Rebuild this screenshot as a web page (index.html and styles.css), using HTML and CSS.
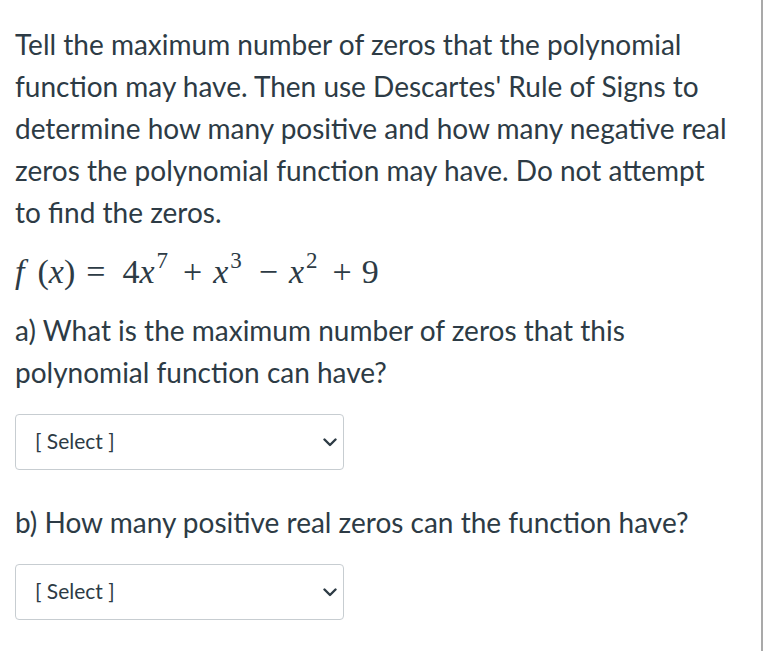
FILE: index.html
```html
<!DOCTYPE html>
<html>
<head>
<meta charset="utf-8">
<link rel="stylesheet" href="styles.css">
</head>
<body>
<div class="page">
  <p class="text intro">Tell the maximum number of zeros that the polynomial function may have. Then use Descartes' Rule of Signs to determine how many positive and how many negative real zeros the polynomial function may have. Do not attempt to find the zeros.</p>
  <p class="math"><span class="mi f">f</span><span class="mo">(</span><span class="mi">x</span><span class="mo">)</span><span class="rel">=</span><span class="mn">4</span><span class="mi">x</span><sup>7</sup><span class="bin">+</span><span class="mi">x</span><sup>3</sup><span class="bin minus">−</span><span class="mi">x</span><sup>2</sup><span class="bin last">+</span><span class="mn">9</span></p>
  <p class="text qa">a) What is the maximum number of zeros that this polynomial function can have?</p>
  <div class="select"><span class="select-label">[ Select ]</span><svg class="chev" width="14" height="9" viewBox="0 0 14 9"><path d="M1.5 1.5 L7 7 L12.5 1.5" fill="none" stroke="#2d3b45" stroke-width="2.4" stroke-linecap="round" stroke-linejoin="round"/></svg></div>
  <p class="text qb">b) How many positive real zeros can the function have?</p>
  <div class="select"><span class="select-label">[ Select ]</span><svg class="chev" width="14" height="9" viewBox="0 0 14 9"><path d="M1.5 1.5 L7 7 L12.5 1.5" fill="none" stroke="#2d3b45" stroke-width="2.4" stroke-linecap="round" stroke-linejoin="round"/></svg></div>
</div>
</body>
</html>
```
FILE: styles.css
```css
html, body {
  margin: 0;
  padding: 0;
  background: #fff;
}
.page {
  box-sizing: border-box;
  width: 763px;
  height: 651px;
  border-right: 2px solid #a9a9a9;
  padding: 23px 0 0 15px;
  color: #2d3b45;
  font-family: Lato, "Liberation Sans", sans-serif;
  overflow: hidden;
}
.text {
  margin: 0;
  font-size: 28px;
  line-height: 42px;
  width: 720px;
}
.intro {
  margin-bottom: 16px;
}
.math {
  margin: 0;
  height: 46px;
  font-family: "Liberation Serif", serif;
  font-size: 34px;
  line-height: 46px;
  color: #2d3b45;
  white-space: nowrap;
}
.mi { font-style: italic; }
.f { margin-right: 13px; }
.rel { margin: 0 17px 0 11px; }
.bin { margin: 0 11px 0 15px; }
.minus { margin: 0 11px 0 17px; }
.last { margin: 0 10px 0 15px; }
sup {
  font-size: 23px;
  line-height: 0;
  vertical-align: 15px;
  margin-left: 2px;
}
.qa {
  margin-top: 14px;
  margin-bottom: 21px;
}
.qb {
  margin-top: 31px;
  margin-bottom: 21px;
}
.select {
  box-sizing: border-box;
  width: 329px;
  height: 56px;
  border: 1px solid #c7cdd1;
  border-radius: 4px;
  display: flex;
  align-items: center;
  justify-content: space-between;
  padding: 0 6px 3px 19px;
  font-size: 21px;
  color: #2d3b45;
}
.chev { display: block; margin-top: 3px; }
```
